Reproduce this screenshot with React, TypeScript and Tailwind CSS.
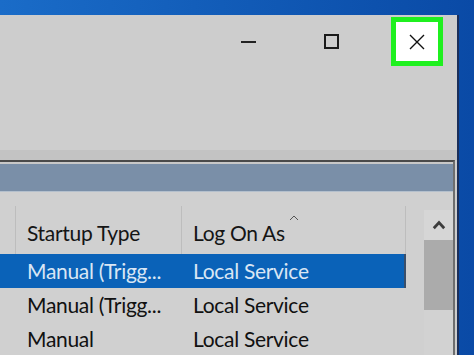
import React from 'react';

const rows = [
  { startup: 'Manual (Trigg...', logon: 'Local Service', selected: true },
  { startup: 'Manual (Trigg...', logon: 'Local Service', selected: false },
  { startup: 'Manual', logon: 'Local Service', selected: false },
];

const App = () => {
  return (
    <div
      className="w-[474px] h-[355px] overflow-hidden flex flex-col bg-gradient-to-r from-[#1a6cc8] to-[#0a4aa6]"
      style={{ fontFamily: 'Lato, "Noto Sans", sans-serif' }}
    >
      <div className="h-[15px] shrink-0" />
      <div className="flex flex-1 min-h-0">
        {/* Window */}
        <div className="w-[459px] shrink-0 bg-[#cdcdcd] border-r-[2px] border-[#1b2f5a] flex flex-col">
          {/* Title bar */}
          <div className="h-[95px] shrink-0 flex items-start justify-end pr-[14px]">
            <div className="mt-[2px] h-[49px] flex items-center">
              <div className="w-[83px] flex justify-center">
                <div className="w-[15px] h-[2px] bg-[#222]" />
              </div>
              <div className="w-[83px] mr-[18px] flex justify-center">
                <div className="w-[15px] h-[15px] border-[2px] border-[#1a1a1a]" />
              </div>
              <div className="w-[52px] h-[49px] border-[5px] border-[#1ff01f] bg-white flex items-center justify-center">
                <svg width="16" height="16" viewBox="0 0 16 16">
                  <path d="M1 1 L15 15 M15 1 L1 15" stroke="#111" strokeWidth="1.4" fill="none" />
                </svg>
              </div>
            </div>
          </div>
          <div className="h-[1px] bg-[#8a8a8a]" />
          <div className="h-[1px] bg-[#bdbdbd]" />
          {/* Toolbar band */}
          <div className="h-[40px] shrink-0 bg-[#cecece]" />
          <div className="h-[10px] shrink-0 bg-[#c3c3c3]" />
          <div className="h-[1px] bg-[#e2e2e2]" />
          {/* Inner panel */}
          <div className="flex-1 flex flex-col border-t-[2px] border-[#4a4a4a] border-r-[2px] border-r-[#6e6e6e] mr-[2px]">
            <div className="h-[2px] bg-[#c8c8c8]" />
            <div className="h-[27px] shrink-0 bg-[#7a8fa8]" />
            <div className="h-[1px] bg-[#b4c0cd]" />
            <div className="flex-1 bg-[#d0d0d0] flex pt-[14px] tracking-[-0.3px]">
              {/* List */}
              <div className="w-[406px] shrink-0 flex flex-col">
                <div className="h-[48px] shrink-0 flex text-[21px] text-[#151515]">
                  <div className="w-[16px] border-r border-[#bdbdbd]" />
                  <div className="w-[166px] border-r border-[#bdbdbd] pl-[11px] flex items-end pb-[6px]">
                    Startup Type
                  </div>
                  <div className="w-[224px] border-r border-[#bdbdbd] pl-[11px] flex items-end pb-[6px] relative">
                    Log On As
                    <svg className="absolute left-[107px] top-[9px]" width="10" height="6" viewBox="0 0 10 6">
                      <path d="M1 5 L5 1 L9 5" stroke="#555" strokeWidth="1" fill="none" />
                    </svg>
                  </div>
                </div>
                {rows.map((row, i) => (
                  <div
                    key={i}
                    className={
                      row.selected
                        ? 'h-[34px] shrink-0 flex items-center text-[21px] bg-[#0a62b8] text-[#d9e6f4] border-r-[2px] border-[#3a4f6a]'
                        : 'h-[34px] shrink-0 flex items-center text-[21px] text-[#111]'
                    }
                  >
                    <div className="w-[16px]" />
                    <div className="w-[166px] pl-[11px] whitespace-nowrap">{row.startup}</div>
                    <div className="pl-[11px] whitespace-nowrap">{row.logon}</div>
                  </div>
                ))}
              </div>
              <div className="w-[18px]" />
              {/* Scrollbar */}
              <div className="w-[29px] shrink-0 flex flex-col pt-[4px]">
                <div className="h-[30px] bg-[#d6d6d6] flex items-center justify-center">
                  <svg width="14" height="10" viewBox="0 0 14 10">
                    <path d="M1.8 8.2 L7 2.6 L12.2 8.2" stroke="#3c3c3c" strokeWidth="2.8" fill="none" />
                  </svg>
                </div>
                <div className="h-[70px] bg-[#ababab]" />
                <div className="flex-1 bg-[#d2d2d2]" />
              </div>
            </div>
          </div>
        </div>
        <div className="flex-1" />
      </div>
    </div>
  );
};

export default App;
